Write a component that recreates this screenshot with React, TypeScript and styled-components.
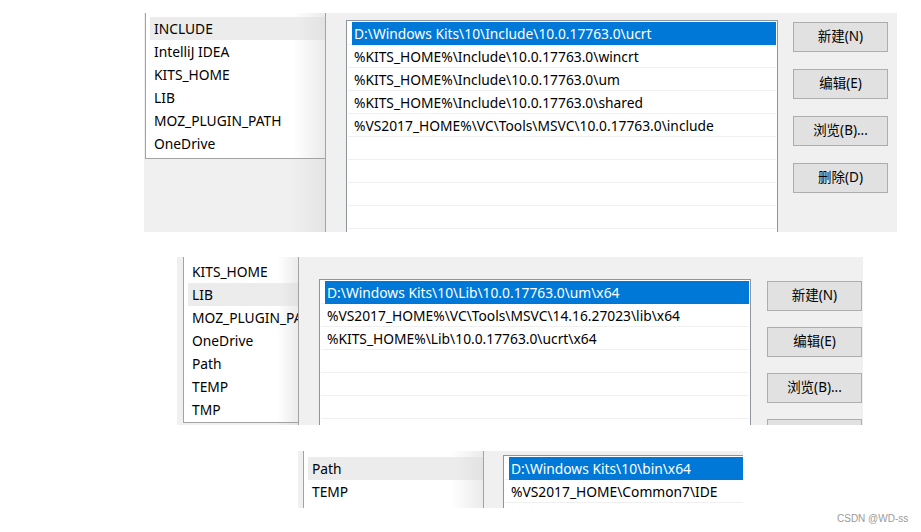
import styled, { createGlobalStyle } from "styled-components";

const GlobalStyle = createGlobalStyle`
  html, body {
    margin: 0;
    padding: 0;
    background: #ffffff;
  }
  body {
    font-family: "Noto Sans", "Noto Sans CJK SC", sans-serif;
    color: #000000;
  }
`;

const Page = styled.main`
  width: 921px;
  height: 532px;
  display: flex;
  flex-direction: column;
  padding-top: 13px;
  box-sizing: border-box;
  overflow: hidden;
`;

const Shot = styled.section<{
  $left: number;
  $width: number;
  $height: number;
  $top: number;
  $pad: number;
}>`
  margin-left: ${(p) => p.$left}px;
  margin-top: ${(p) => p.$top}px;
  width: ${(p) => p.$width}px;
  height: ${(p) => p.$height}px;
  padding-left: ${(p) => p.$pad}px;
  box-sizing: border-box;
  background: #f0f0f0;
  overflow: hidden;
  display: flex;
  align-items: flex-start;
  flex-shrink: 0;
`;

const LeftCol = styled.div<{ $width: number }>`
  width: ${(p) => p.$width}px;
  flex-shrink: 0;
  align-self: stretch;
  box-sizing: border-box;
  border-right: 1px solid #a3a3a3;
  background: linear-gradient(to right, #f0f0f0 80%, #e4e4e4);
`;

const VarList = styled.ul<{ $padTop: number; $height: number; $bottom: boolean }>`
  list-style: none;
  margin: 0;
  padding: ${(p) => p.$padTop}px 0 0 4px;
  height: ${(p) => p.$height}px;
  box-sizing: border-box;
  border-left: 1px solid #a3a3a3;
  border-bottom: ${(p) => (p.$bottom ? "1px solid #a3a3a3" : "none")};
  background: linear-gradient(to right, #ffffff 82%, #ebebeb);
  overflow: hidden;
`;

const VarRow = styled.li<{ $active?: boolean }>`
  height: 23px;
  line-height: 23px;
  padding-left: 4px;
  font-size: 13.8px;
  white-space: nowrap;
  overflow: hidden;
  background: ${(p) =>
    p.$active ? "linear-gradient(to right, #ececec 85%, #e2e2e2)" : "transparent"};
`;

const PathList = styled.ul<{ $gap: number; $top: number }>`
  list-style: none;
  margin: ${(p) => p.$top}px 0 0 ${(p) => p.$gap}px;
  padding: 1px;
  width: 432px;
  flex-shrink: 0;
  height: 400px;
  box-sizing: border-box;
  border: 1px solid #8f959e;
  background: #ffffff;
`;

const PathRow = styled.li`
  height: 23px;
  box-sizing: border-box;
  border-bottom: 1px solid #f0f0f0;
  display: flex;
`;

const PathText = styled.span<{ $selected?: boolean }>`
  flex: 1;
  margin-left: 4px;
  padding-left: 2px;
  height: 23px;
  line-height: 23px;
  font-size: 13.8px;
  white-space: nowrap;
  color: ${(p) => (p.$selected ? "#ffffff" : "#000000")};
  background: ${(p) => (p.$selected ? "#0078d7" : "transparent")};
`;

const Buttons = styled.div<{ $gap: number; $left: number; $top: number }>`
  display: flex;
  flex-direction: column;
  gap: ${(p) => p.$gap}px;
  margin: ${(p) => p.$top}px 0 0 ${(p) => p.$left}px;
  flex-shrink: 0;
`;

const Button = styled.button`
  width: 95px;
  height: 30px;
  box-sizing: border-box;
  border: 1px solid #adadad;
  background: #e1e1e1;
  font-family: "Noto Sans", "Noto Sans CJK SC", sans-serif;
  font-size: 13.5px;
  line-height: 1;
  color: #000000;
  padding: 0 0 1px;
  display: flex;
  align-items: center;
  justify-content: center;
`;

const Watermark = styled.div`
  margin: 4px 0 0 837px;
  font-family: "Liberation Sans", Arial, sans-serif;
  font-size: 10px;
  color: #9a9a9a;
  line-height: 14px;
`;

const buttonLabels = ["新建(N)", "编辑(E)", "浏览(B)...", "删除(D)"];

function Paths({ items, rows, gap, top }: { items: string[]; rows: number; gap: number; top: number }) {
  const all = [...items, ...Array(Math.max(0, rows - items.length)).fill("")];
  return (
    <PathList $gap={gap} $top={top}>
      {all.map((p, i) => (
        <PathRow key={i}>
          <PathText $selected={i === 0}>{p}</PathText>
        </PathRow>
      ))}
    </PathList>
  );
}

export default function App() {
  return (
    <Page>
      <GlobalStyle />

      <Shot $left={144} $width={753} $height={219} $top={0} $pad={1}>
        <LeftCol $width={181}>
          <VarList $padTop={4} $height={146} $bottom>
            <VarRow $active>INCLUDE</VarRow>
            <VarRow>IntelliJ IDEA</VarRow>
            <VarRow>KITS_HOME</VarRow>
            <VarRow>LIB</VarRow>
            <VarRow>MOZ_PLUGIN_PATH</VarRow>
            <VarRow>OneDrive</VarRow>
          </VarList>
        </LeftCol>
        <Paths
          gap={20}
          top={7}
          rows={10}
          items={[
            "D:\\Windows Kits\\10\\Include\\10.0.17763.0\\ucrt",
            "%KITS_HOME%\\Include\\10.0.17763.0\\wincrt",
            "%KITS_HOME%\\Include\\10.0.17763.0\\um",
            "%KITS_HOME%\\Include\\10.0.17763.0\\shared",
            "%VS2017_HOME%\\VC\\Tools\\MSVC\\10.0.17763.0\\include",
          ]}
        />
        <Buttons $gap={17} $left={15} $top={9}>
          {buttonLabels.map((b) => (
            <Button key={b} type="button">
              {b}
            </Button>
          ))}
        </Buttons>
      </Shot>

      <Shot $left={177} $width={686} $height={168} $top={25} $pad={6}>
        <LeftCol $width={116}>
          <VarList $padTop={3} $height={166} $bottom>
            <VarRow>KITS_HOME</VarRow>
            <VarRow $active>LIB</VarRow>
            <VarRow>MOZ_PLUGIN_PATH</VarRow>
            <VarRow>OneDrive</VarRow>
            <VarRow>Path</VarRow>
            <VarRow>TEMP</VarRow>
            <VarRow>TMP</VarRow>
          </VarList>
        </LeftCol>
        <Paths
          gap={20}
          top={22}
          rows={8}
          items={[
            "D:\\Windows Kits\\10\\Lib\\10.0.17763.0\\um\\x64",
            "%VS2017_HOME%\\VC\\Tools\\MSVC\\14.16.27023\\lib\\x64",
            "%KITS_HOME%\\Lib\\10.0.17763.0\\ucrt\\x64",
          ]}
        />
        <Buttons $gap={16} $left={16} $top={24}>
          {buttonLabels.map((b) => (
            <Button key={b} type="button">
              {b}
            </Button>
          ))}
        </Buttons>
      </Shot>

      <Shot $left={298} $width={445} $height={57} $top={26} $pad={5}>
        <LeftCol $width={181}>
          <VarList $padTop={6} $height={57} $bottom={false}>
            <VarRow $active>Path</VarRow>
            <VarRow>TEMP</VarRow>
          </VarList>
        </LeftCol>
        <Paths
          gap={19}
          top={4}
          rows={3}
          items={["D:\\Windows Kits\\10\\bin\\x64", "%VS2017_HOME\\Common7\\IDE"]}
        />
      </Shot>

      <Watermark>CSDN @WD-ss</Watermark>
    </Page>
  );
}
